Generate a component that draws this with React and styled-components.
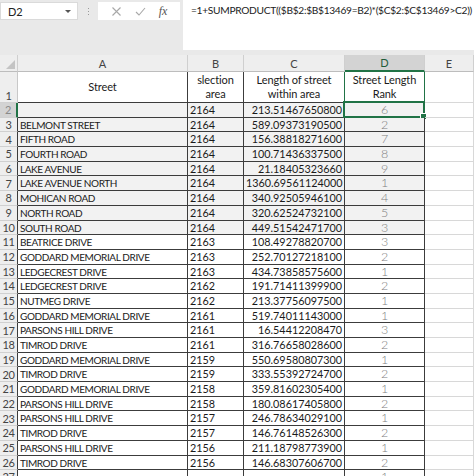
import React from 'react'
import styled, { createGlobalStyle, css } from 'styled-components'

const GlobalStyle = createGlobalStyle`
    html, body {
        margin: 0;
        padding: 0;
        background: #ffffff;
    }
    body {
        font-family: Lato, "Liberation Sans", sans-serif;
    }
`;

const GREEN = '#217346';
const DARK = '#3c3c3c';
const LIGHT = '#d8d8d8';

const COLS = [18, 170, 56, 101, 80, 49];
const ROW_H = 14.7;

const rows = [
    ['', '2164', '213.51467650800', '6'],
    ['BELMONT STREET', '2164', '589.09373190500', '2'],
    ['FIFTH ROAD', '2164', '156.38818271600', '7'],
    ['FOURTH ROAD', '2164', '100.71436337500', '8'],
    ['LAKE AVENUE', '2164', '21.18405323660', '9'],
    ['LAKE AVENUE NORTH', '2164', '1360.69561124000', '1'],
    ['MOHICAN ROAD', '2164', '340.92505946100', '4'],
    ['NORTH ROAD', '2164', '320.62524732100', '5'],
    ['SOUTH ROAD', '2164', '449.51542471700', '3'],
    ['BEATRICE DRIVE', '2163', '108.49278820700', '3'],
    ['GODDARD MEMORIAL DRIVE', '2163', '252.70127218100', '2'],
    ['LEDGECREST DRIVE', '2163', '434.73858575600', '1'],
    ['LEDGECREST DRIVE', '2162', '191.71411399900', '2'],
    ['NUTMEG DRIVE', '2162', '213.37756097500', '1'],
    ['GODDARD MEMORIAL DRIVE', '2161', '519.74011143000', '1'],
    ['PARSONS HILL DRIVE', '2161', '16.54412208470', '3'],
    ['TIMROD DRIVE', '2161', '316.76658028600', '2'],
    ['GODDARD MEMORIAL DRIVE', '2159', '550.69580807300', '1'],
    ['TIMROD DRIVE', '2159', '333.55392724700', '2'],
    ['GODDARD MEMORIAL DRIVE', '2158', '359.81602305400', '1'],
    ['PARSONS HILL DRIVE', '2158', '180.08617405800', '2'],
    ['PARSONS HILL DRIVE', '2157', '246.78634029100', '1'],
    ['TIMROD DRIVE', '2157', '146.76148526300', '2'],
    ['PARSONS HILL DRIVE', '2156', '211.18798773900', '1'],
    ['TIMROD DRIVE', '2156', '146.68307606700', '2'],
    ['', '', '', '1'],
];

const Page = styled.div`
    width: 474px;
    height: 476px;
    overflow: hidden;
    background: #e9e9e9;
    color: #1a1a1a;
`;

const TopBar = styled.div`
    display: flex;
    height: 50px;
    align-items: flex-start;
`;

const NameBox = styled.div`
    width: 78px;
    height: 18px;
    margin-top: 2px;
    background: #fff;
    border: 1px solid #dadada;
    box-sizing: border-box;
    display: flex;
    align-items: center;
    justify-content: space-between;
    padding: 0 6px 0 7px;
    font-size: 11px;
    color: #222;
`;

const Caret = styled.span`
    width: 0;
    height: 0;
    border-left: 3px solid transparent;
    border-right: 3px solid transparent;
    border-top: 3px solid #555;
`;

const Dots = styled.div`
    width: 20px;
    height: 18px;
    margin-top: 2px;
    display: flex;
    flex-direction: column;
    align-items: center;
    justify-content: center;
    gap: 2px;

    span {
        width: 1px;
        height: 1px;
        background: #9a9a9a;
    }
`;

const FuncBox = styled.div`
    width: 82px;
    height: 18px;
    margin-top: 2px;
    background: #fff;
    display: flex;
    align-items: center;
    justify-content: space-around;
    padding: 0 6px;
    box-sizing: border-box;
`;

const Fx = styled.span`
    font-family: "Liberation Serif", serif;
    font-style: italic;
    font-size: 12px;
    color: #555;
`;

const FormulaBar = styled.div`
    flex: 1;
    height: 50px;
    margin-left: 3px;
    background: #fff;
    box-sizing: border-box;
    padding: 4px 0 0 8px;
    font-size: 10.2px;
    letter-spacing: -0.3px;
    color: #222;
    white-space: nowrap;
    overflow: hidden;
`;

const Spacer = styled.div`
    height: 5px;
`;

const Sheet = styled.div`
    background: #fff;
`;

const Row = styled.div`
    display: flex;
    height: ${p => p.h}px;
`;

const HeadCell = styled.div`
    width: ${p => p.w}px;
    flex: none;
    box-sizing: border-box;
    background: ${p => (p.active ? '#d3d3d3' : '#eeeeee')};
    border-right: 1px solid #cfcfcf;
    border-bottom: ${p => (p.active ? `2px solid ${GREEN}` : '1px solid #bdbdbd')};
    display: flex;
    align-items: center;
    justify-content: center;
    font-size: 11px;
    color: ${p => (p.active ? '#1f5c3a' : '#444')};
    position: relative;
`;

const Corner = styled.span`
    position: absolute;
    right: 2px;
    bottom: 2px;
    width: 0;
    height: 0;
    border-left: 9px solid transparent;
    border-bottom: 9px solid #c4c4c4;
`;

const RowHead = styled.div`
    width: ${COLS[0]}px;
    flex: none;
    box-sizing: border-box;
    background: ${p => (p.active ? '#d3d3d3' : '#eeeeee')};
    border-bottom: 1px solid #d0d0d0;
    border-right: ${p => (p.active ? `2px solid ${GREEN}` : `1px solid ${p.dark ? DARK : '#c8c8c8'}`)};
    display: flex;
    align-items: flex-end;
    justify-content: center;
    font-size: 11px;
    letter-spacing: -0.3px;
    line-height: 13.5px;
    color: ${p => (p.active ? '#8a8a8a' : '#444')};
`;

const Cell = styled.div`
    width: ${p => p.w}px;
    flex: none;
    box-sizing: border-box;
    border-right: 1px solid ${p => (p.table ? DARK : LIGHT)};
    border-bottom: 1px solid ${p => (p.table ? DARK : LIGHT)};
    background: ${p => (p.shade ? '#f2f2f2' : 'transparent')};
    font-size: ${p => (p.num ? '10.8px' : '10px')};
    letter-spacing: ${p => (p.num ? '0' : '-0.4px')};
    line-height: ${ROW_H}px;
    white-space: nowrap;
    overflow: hidden;
    padding: 0 2px;
    text-align: ${p => p.align || 'left'};
    position: relative;

    ${p => p.rank && css`
        font-weight: 300;
        font-size: 12.5px;
        color: #7f7f7f;
        text-align: center;
    `}
`;

const TitleCell = styled(Cell)`
    display: flex;
    align-items: center;
    justify-content: center;
    text-align: center;
    white-space: normal;
    line-height: 14px;
    font-size: 11px;
    letter-spacing: -0.1px;
    padding: 0;
    ${p => p.green && css`
        border-left: 1px solid ${GREEN};
        border-right: 1px solid ${GREEN};
        margin-left: -1px;
        width: ${p.w + 1}px;
    `}
`;

const Selection = styled.div`
    position: absolute;
    left: -2px;
    top: -2px;
    right: -1px;
    bottom: -1px;
    border: 2px solid ${GREEN};
    pointer-events: none;
`;

const Handle = styled.div`
    position: absolute;
    right: -4px;
    bottom: -4px;
    width: 5px;
    height: 5px;
    background: ${GREEN};
    border: 1px solid #fff;
`;

const CrossIcon = () => (
    <svg width="11" height="11" viewBox="0 0 11 11">
        <path d="M1.5 1.5 L9.5 9.5 M9.5 1.5 L1.5 9.5" stroke="#a8a8a8" strokeWidth="1.1" fill="none" />
    </svg>
);

const CheckIcon = () => (
    <svg width="11" height="11" viewBox="0 0 11 11">
        <path d="M1 6 L4 9 L10 2" stroke="#a8a8a8" strokeWidth="1.1" fill="none" />
    </svg>
);

const App = () => {
    return (
        <Page>
            <GlobalStyle />
            <TopBar>
                <NameBox>
                    D2
                    <Caret />
                </NameBox>
                <Dots>
                    <span />
                    <span />
                    <span />
                </Dots>
                <FuncBox>
                    <CrossIcon />
                    <CheckIcon />
                    <Fx>fx</Fx>
                </FuncBox>
                <FormulaBar>=1+SUMPRODUCT(($B$2:$B$13469=B2)*($C$2:$C$13469&gt;C2))</FormulaBar>
            </TopBar>
            <Spacer />
            <Sheet>
                <Row h={17}>
                    <HeadCell w={COLS[0]}>
                        <Corner />
                    </HeadCell>
                    {['A', 'B', 'C', 'D', 'E'].map((letter, i) => (
                        <HeadCell key={letter} w={COLS[i + 1]} active={letter === 'D'}>
                            {letter}
                        </HeadCell>
                    ))}
                </Row>
                <Row h={31}>
                    <RowHead>1</RowHead>
                    <TitleCell w={COLS[1]} table>Street</TitleCell>
                    <TitleCell w={COLS[2]} table>slection<br />area</TitleCell>
                    <TitleCell w={COLS[3]} table>Length of street<br />within area</TitleCell>
                    <TitleCell w={COLS[4]} table green>Street Length<br />Rank</TitleCell>
                    <Cell w={COLS[5]} />
                </Row>
                {rows.map((r, index) => {
                    const rowNum = index + 2;
                    const shade = rowNum <= 10;
                    const active = rowNum === 2;
                    return (
                        <Row key={`row-${rowNum}`} h={ROW_H}>
                            <RowHead active={active} dark>{rowNum}</RowHead>
                            <Cell w={COLS[1]} table shade={shade}>{r[0]}</Cell>
                            <Cell w={COLS[2]} table shade={shade} num>{r[1]}</Cell>
                            <Cell w={COLS[3]} table shade={shade} num align="right">{r[2]}</Cell>
                            <Cell w={COLS[4]} table shade={shade} rank style={active ? { overflow: 'visible' } : undefined}>
                                {r[3]}
                                {active && (
                                    <Selection>
                                        <Handle />
                                    </Selection>
                                )}
                            </Cell>
                            <Cell w={COLS[5]} />
                        </Row>
                    );
                })}
            </Sheet>
        </Page>
    )
};

export default App;
